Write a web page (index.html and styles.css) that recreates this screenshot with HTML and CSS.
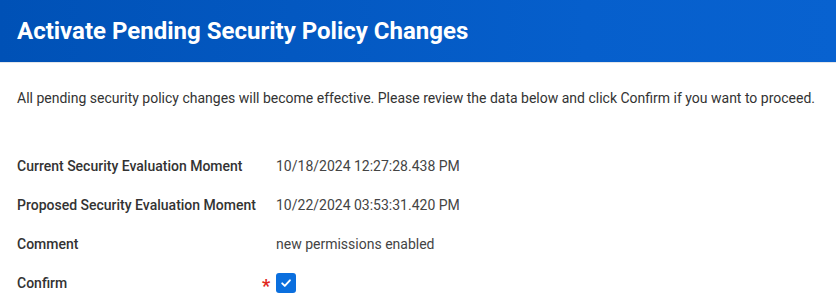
FILE: index.html
```html
<!DOCTYPE html>
<html>
<head>
<meta charset="utf-8">
<link rel="stylesheet" href="styles.css">
</head>
<body>
<header class="header">
  <h1 class="title">Activate Pending Security Policy Changes</h1>
</header>
<main class="content">
  <p class="intro">All pending security policy changes will become effective. Please review the data below and click Confirm if you want to proceed.</p>
  <div class="fields">
    <div class="row">
      <div class="label">Current Security Evaluation Moment</div>
      <div class="value">10/18/2024 12:27:28.438 PM</div>
    </div>
    <div class="row">
      <div class="label">Proposed Security Evaluation Moment</div>
      <div class="value">10/22/2024 03:53:31.420 PM</div>
    </div>
    <div class="row">
      <div class="label">Comment</div>
      <div class="value">new permissions enabled</div>
    </div>
    <div class="row">
      <div class="label">Confirm</div>
      <div class="value control">
        <span class="required">*</span>
        <span class="checkbox">
          <svg width="12" height="12" viewBox="0 0 12 12"><path d="M2.2 6.3 L4.8 8.9 L9.9 3.3" fill="none" stroke="#fff" stroke-width="1.9" stroke-linecap="round" stroke-linejoin="round"/></svg>
        </span>
      </div>
    </div>
  </div>
</main>
</body>
</html>
```
FILE: styles.css
```css
html, body {
  margin: 0;
  padding: 0;
  background: #fff;
}
body {
  font-family: Roboto, "Liberation Sans", sans-serif;
  color: #333;
  width: 836px;
  height: 308px;
  overflow: hidden;
}
.header {
  height: 62px;
  background: linear-gradient(90deg, #0051b6 0%, #065fcc 70%, #0862d0 100%);
  border-bottom: 1px solid #e3e6ea;
  display: flex;
  align-items: center;
  padding: 0 17px;
  box-sizing: content-box;
}
.title {
  margin: 0;
  padding-bottom: 1px;
  font-size: 24px;
  font-weight: 700;
  color: #fff;
  letter-spacing: 0;
}
.content {
  padding: 0 17px;
}
.intro {
  margin: 25px 0 0;
  font-size: 14px;
  line-height: 20px;
  color: #333;
}
.fields {
  margin-top: 48px;
  display: flex;
  flex-direction: column;
  gap: 19px;
}
.row {
  display: flex;
  align-items: center;
  height: 20px;
  font-size: 14px;
}
.label {
  width: 259px;
  font-weight: 500;
  color: #333;
}
.value {
  color: #444;
}
.control {
  display: flex;
  align-items: center;
  margin-left: -14px;
  gap: 5px;
}
.required {
  color: #e0281e;
  font-size: 18px;
  font-weight: 700;
  line-height: 20px;
  padding-top: 6px;
  width: 9px;
}
.checkbox {
  width: 20px;
  height: 20px;
  border-radius: 3px;
  background: #0b6fde;
  display: flex;
  align-items: center;
  justify-content: center;
}
```
